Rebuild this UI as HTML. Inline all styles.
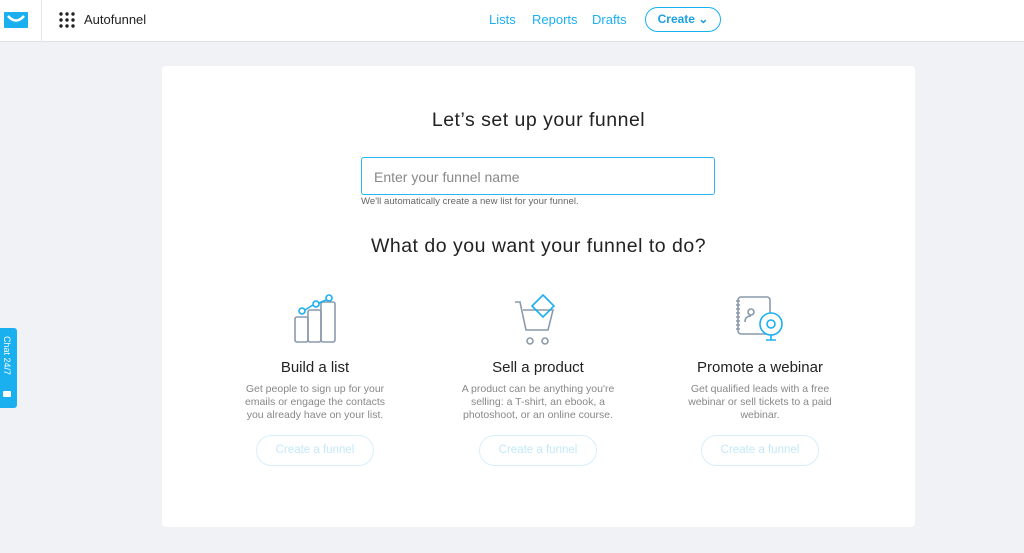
<!DOCTYPE html>
<html><head><style>
*{margin:0;padding:0;box-sizing:border-box}
body{width:1024px;height:553px;background:#f1f2f5;font-family:"Liberation Sans",sans-serif;position:relative;overflow:hidden}
.top{position:absolute;left:0;top:0;width:1024px;height:42px;background:#fff;border-bottom:1px solid #dfe1e5}
.logo{position:absolute;left:0;top:0;width:42px;height:42px;border-right:1px solid #e3e5e8}
.nav a{position:absolute;top:12px;font-size:13px;color:#1ab0f0}
.create{position:absolute;left:645px;top:7px;width:76px;height:25px;border:1px solid #1ab0f0;border-radius:13px;color:#1a9fe0;font-size:12px;font-weight:bold;text-align:center;line-height:23px}
.card{position:absolute;left:162px;top:66px;width:753px;height:461px;background:#fff;border-radius:4px}
h1{position:absolute;left:0;width:753px;text-align:center;font-weight:normal;color:#222;letter-spacing:.5px}
.inp{position:absolute;left:199px;top:91px;width:354px;height:38px;border:1px solid #2bb6ee;border-radius:3px;font-size:14px;color:#888;padding:11px 12px}
.hint{position:absolute;left:199px;top:130px;font-size:9.6px;color:#666}
.col{position:absolute;top:290px;width:200px;text-align:center}
.col h2{font-size:15px;font-weight:normal;color:#222;margin-top:0}
.col p{font-size:10.5px;color:#888;line-height:13px;margin-top:7px}
.btn{position:absolute;width:118px;height:31px;border:1px solid #d6effb;border-radius:16px;color:#c4e8fa;font-size:11.5px;text-align:center;line-height:29px;top:435px}
.chat{position:absolute;left:0;top:328px;width:17px;height:80px;background:#1ab0f0;border-radius:0 3px 3px 0}
</style></head><body>
<div class="top">
 <div class="logo"><svg width="42" height="42"><rect x="4" y="12" width="24" height="16" rx="1" fill="#1ab0f0"/><path d="M8 16 Q16 25 24 16" stroke="#fff" stroke-width="2.5" fill="none"/></svg></div>
 <svg style="position:absolute;left:59px;top:12px" width="16" height="16" fill="#222"><circle cx="2" cy="2" r="1.7"/><circle cx="8" cy="2" r="1.7"/><circle cx="14" cy="2" r="1.7"/><circle cx="2" cy="8" r="1.7"/><circle cx="8" cy="8" r="1.7"/><circle cx="14" cy="8" r="1.7"/><circle cx="2" cy="14" r="1.7"/><circle cx="8" cy="14" r="1.7"/><circle cx="14" cy="14" r="1.7"/></svg>
 <div style="position:absolute;left:84px;top:12px;font-size:13px;color:#222">Autofunnel</div>
 <div class="nav"><a style="left:489px">Lists</a><a style="left:532px">Reports</a><a style="left:592px">Drafts</a></div>
 <div class="create">Create &#8964;</div>
</div>
<div class="chat"><div style="position:absolute;left:2px;top:8px;writing-mode:vertical-rl;color:#fff;font-size:9px">Chat 24/7</div><div style="position:absolute;left:3px;top:63px;width:8px;height:6px;background:#fff;border-radius:1px"></div></div>
<div class="card">
 <h1 style="top:43px;font-size:19.5px">Let’s set up your funnel</h1>
 <div class="inp">Enter your funnel name</div>
 <div class="hint">We'll automatically create a new list for your funnel.</div>
 <h1 style="top:169px;font-size:19.5px">What do you want your funnel to do?</h1>
</div>
<svg style="position:absolute;left:290px;top:290px" width="52" height="56" fill="none" stroke-width="1.6">
 <g stroke="#8a9aab"><rect x="5" y="27" width="13" height="25" rx="2"/><rect x="18" y="20" width="13" height="32" rx="2"/><rect x="31" y="12" width="14" height="40" rx="2"/></g>
 <g stroke="#1ab0f0"><circle cx="12" cy="21" r="3"/><circle cx="26" cy="14" r="3"/><circle cx="39" cy="8" r="3"/><path d="M15 20L23 15M29 13L36 10"/></g>
</svg>
<svg style="position:absolute;left:513px;top:292px" width="52" height="56" fill="none" stroke-width="1.6">
 <path d="M2 10h5l6 28h22l5-20H10" stroke="#8a9aab"/><circle cx="17" cy="49" r="3" stroke="#8a9aab"/><circle cx="32" cy="49" r="3" stroke="#8a9aab"/>
 <path d="M30 3l11 11-11 11-11-11z" stroke="#1ab0f0"/>
</svg>
<svg style="position:absolute;left:735px;top:295px" width="52" height="56" fill="none" stroke-width="1.6">
 <rect x="3" y="2" width="32" height="37" rx="3" stroke="#8a9aab"/><path d="M1 6h4M1 10h4M1 14h4M1 18h4M1 22h4M1 26h4M1 30h4M1 34h4" stroke="#8a9aab"/>
 <circle cx="16" cy="17" r="3" stroke="#8a9aab"/><path d="M10 27q0-6 6-6" stroke="#8a9aab"/>
 <circle cx="36" cy="29" r="11" stroke="#1ab0f0" fill="#fff"/><circle cx="36" cy="29" r="4" stroke="#1ab0f0"/><path d="M36 40v5M31 45h10" stroke="#1ab0f0"/>
</svg>
<div class="col" style="left:215px;top:359px"><h2>Build a list</h2><p>Get people to sign up for your<br>emails or engage the contacts<br>you already have on your list.</p></div>
<div class="col" style="left:438px;top:359px"><h2>Sell a product</h2><p>A product can be anything you're<br>selling: a T-shirt, an ebook, a<br>photoshoot, or an online course.</p></div>
<div class="col" style="left:660px;top:359px"><h2>Promote a webinar</h2><p>Get qualified leads with a free<br>webinar or sell tickets to a paid<br>webinar.</p></div>
<div class="btn" style="left:256px">Create a funnel</div>
<div class="btn" style="left:479px">Create a funnel</div>
<div class="btn" style="left:701px">Create a funnel</div>
</body></html>
